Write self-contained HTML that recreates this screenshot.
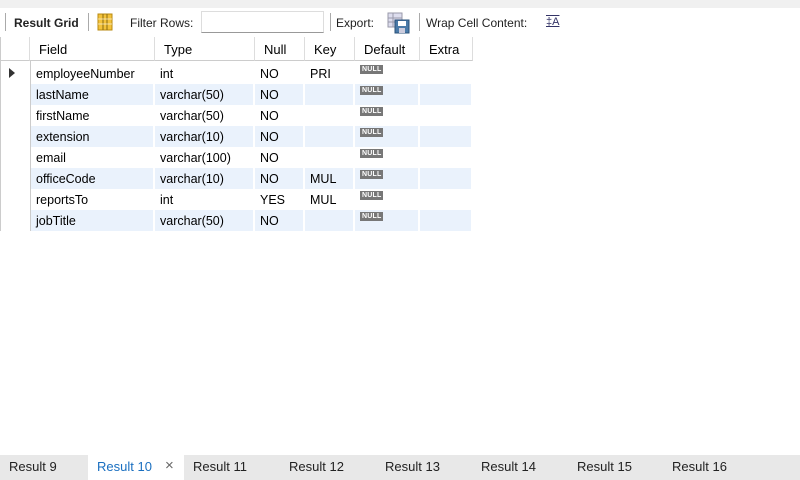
<!DOCTYPE html>
<html><head><style>
*{margin:0;padding:0;box-sizing:border-box}
body{width:800px;height:480px;background:#fff;font-family:"Liberation Sans",Arial,sans-serif;font-size:12.5px;color:#000;position:relative;overflow:hidden}
.top{position:absolute;left:0;top:0;width:800px;height:8px;background:#f0f0f0}
.tb{position:absolute;left:0;top:8px;width:800px;height:28px;background:#fff}
.t{position:absolute;top:16px;font-size:12px;color:#222}
.sep{position:absolute;top:13px;width:1px;height:18px;background:#aaa}
.filter{position:absolute;left:201px;top:11px;width:123px;height:22px;border:1px solid #ddd;border-bottom:1px solid #999;background:#fff}
.grid{position:absolute;left:0;top:37px}
.row{position:absolute;left:0;height:21px;width:473px}
.c{position:absolute;top:0;height:21px;line-height:22px;padding-left:5px;white-space:nowrap}
.hd .c{height:24px;line-height:25px;border-right:1px solid #ddd;border-bottom:1px solid #ccc;padding-left:9px;background:#fff;font-size:13px}
.alt .c{background:#eaf2fc;border-right:2px solid #fff}
.null{display:inline-block;background:#777;color:#fff;font-size:7px;font-weight:bold;line-height:9px;height:9px;padding:0 2px;vertical-align:top;margin-top:2px;letter-spacing:.2px;overflow:visible}
.tabs{position:absolute;left:0;top:455px;width:800px;height:25px;background:#e8e8e8}
.tab{position:absolute;top:4px;font-size:13px;color:#222}
</style></head><body>
<div class="top"></div>
<div class="tb"></div>
<div class="sep" style="left:5px"></div>
<div class="t" style="left:14px;font-weight:bold">Result Grid</div>
<div class="sep" style="left:88px"></div>
<svg style="position:absolute;left:97px;top:13px" width="16" height="18"><rect x="1" y="1" width="14" height="16" fill="#f3c23a" stroke="#b88a10"/><line x1="6" y1="1" x2="6" y2="17" stroke="#8a6a10"/><line x1="10" y1="1" x2="10" y2="17" stroke="#8a6a10"/><line x1="1" y1="6" x2="15" y2="6" stroke="#fff" stroke-opacity=".6"/><line x1="1" y1="11" x2="15" y2="11" stroke="#fff" stroke-opacity=".6"/></svg>
<div class="t" style="left:130px">Filter Rows:</div>
<div class="filter"></div>
<div class="sep" style="left:330px"></div>
<div class="t" style="left:336px">Export:</div>
<svg style="position:absolute;left:387px;top:12px" width="24" height="22"><rect x="1" y="1" width="14" height="14" fill="#dde" stroke="#99a"/><line x1="1" y1="6" x2="15" y2="6" stroke="#99a"/><line x1="1" y1="10" x2="15" y2="10" stroke="#99a"/><line x1="6" y1="1" x2="6" y2="15" stroke="#99a"/><rect x="8" y="8" width="14" height="13" fill="#4a7aa8" stroke="#2a5078"/><rect x="11" y="9" width="8" height="5" fill="#fff"/><rect x="12" y="16" width="6" height="5" fill="#ccd"/></svg>
<div class="sep" style="left:419px"></div>
<div class="t" style="left:426px">Wrap Cell Content:</div>
<div class="t" style="left:546px;font-size:11px;text-decoration:overline underline;color:#336">‡A</div>

<div class="grid">
<div class="row hd" style="top:0">
<div class="c" style="left:0;width:30px;border-left:1px solid #ccc"></div>
<div class="c" style="left:30px;width:125px">Field</div>
<div class="c" style="left:155px;width:100px">Type</div>
<div class="c" style="left:255px;width:50px">Null</div>
<div class="c" style="left:305px;width:50px">Key</div>
<div class="c" style="left:355px;width:65px">Default</div>
<div class="c" style="left:420px;width:53px">Extra</div>
</div>
</div>
<div style="position:absolute;left:0;top:61px;width:1px;height:170px;background:#ccc"></div>
<div style="position:absolute;left:30px;top:61px;width:1px;height:170px;background:#ccc"></div>
<div id="rows"></div>
<svg style="position:absolute;left:9px;top:68px" width="6" height="10"><path d="M0 0L6 5L0 10Z" fill="#333"/></svg>

<div class="tabs">
<div style="position:absolute;left:88px;top:0;width:96px;height:25px;background:#fff"></div>
<div class="tab" style="left:9px">Result 9</div>
<div class="tab" style="left:97px;color:#1a6fc0">Result 10</div>
<div class="tab" style="left:165px;color:#666;font-size:15px;top:2px">×</div>
<div class="tab" style="left:193px">Result 11</div>
<div class="tab" style="left:289px">Result 12</div>
<div class="tab" style="left:385px">Result 13</div>
<div class="tab" style="left:481px">Result 14</div>
<div class="tab" style="left:577px">Result 15</div>
<div class="tab" style="left:672px">Result 16</div>
</div>
<script>
var d=[["employeeNumber","int","NO","PRI"],["lastName","varchar(50)","NO",""],["firstName","varchar(50)","NO",""],["extension","varchar(10)","NO",""],["email","varchar(100)","NO",""],["officeCode","varchar(10)","NO","MUL"],["reportsTo","int","YES","MUL"],["jobTitle","varchar(50)","NO",""]];
var h="";d.forEach(function(r,i){h+='<div class="row'+(i%2?' alt':'')+'" style="top:'+(63+i*21)+'px"><div class="c" style="left:31px;width:124px">'+r[0]+'</div><div class="c" style="left:155px;width:100px">'+r[1]+'</div><div class="c" style="left:255px;width:50px">'+r[2]+'</div><div class="c" style="left:305px;width:50px">'+r[3]+'</div><div class="c" style="left:355px;width:65px;line-height:normal"><span class="null">NULL</span></div><div class="c" style="left:420px;width:53px"></div></div>'});
document.getElementById("rows").innerHTML=h;
</script>
</body></html>
